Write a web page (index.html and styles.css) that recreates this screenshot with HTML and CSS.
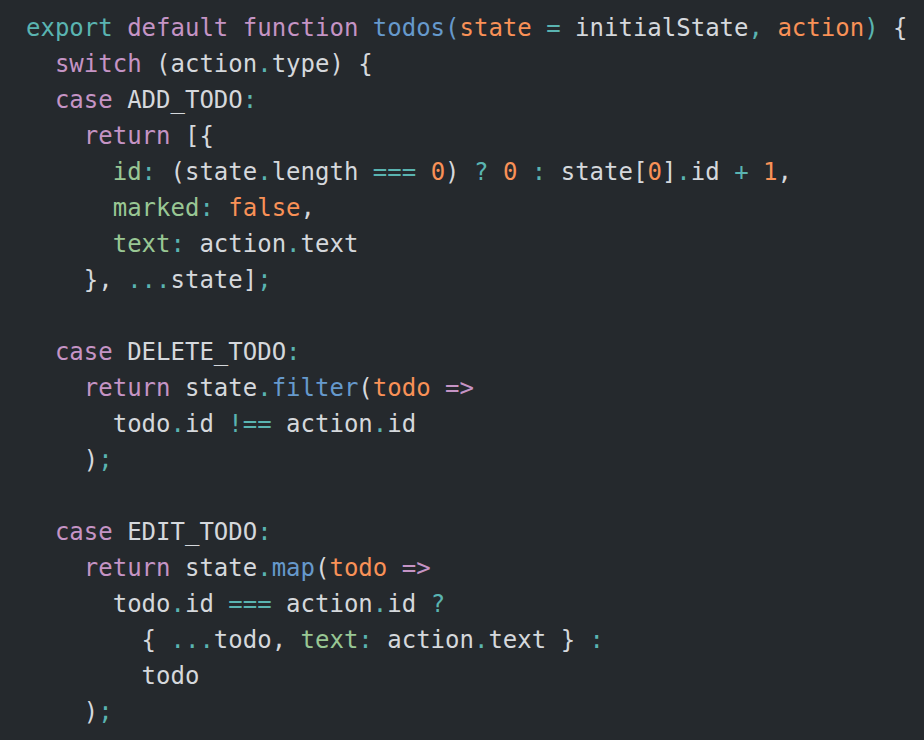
FILE: index.html
```html
<!DOCTYPE html>
<html>
<head>
<meta charset="utf-8">
<link rel="stylesheet" href="styles.css">
</head>
<body>
<pre class="code"><span class="t">export</span> <span class="k">default</span> <span class="k">function</span> <span class="f">todos(</span><span class="p">state</span> <span class="t">=</span> initialState<span class="t">,</span> <span class="p">action</span><span class="t">)</span> {
  <span class="k">switch</span> (action<span class="t">.</span>type) {
  <span class="k">case</span> ADD_TODO<span class="t">:</span>
    <span class="k">return</span> [{
      <span class="g">id</span><span class="t">:</span> (state<span class="t">.</span>length <span class="t">===</span> <span class="p">0</span>) <span class="t">?</span> <span class="p">0</span> <span class="t">:</span> state[<span class="p">0</span>]<span class="t">.</span>id <span class="t">+</span> <span class="p">1</span>,
      <span class="g">marked</span><span class="t">:</span> <span class="p">false</span>,
      <span class="g">text</span><span class="t">:</span> action<span class="t">.</span>text
    }, <span class="t">...</span>state]<span class="t">;</span>

  <span class="k">case</span> DELETE_TODO<span class="t">:</span>
    <span class="k">return</span> state<span class="t">.</span><span class="f">filter</span>(<span class="p">todo</span> <span class="k">=&gt;</span>
      todo<span class="t">.</span>id <span class="t">!==</span> action<span class="t">.</span>id
    )<span class="t">;</span>

  <span class="k">case</span> EDIT_TODO<span class="t">:</span>
    <span class="k">return</span> state<span class="t">.</span><span class="f">map</span>(<span class="p">todo</span> <span class="k">=&gt;</span>
      todo<span class="t">.</span>id <span class="t">===</span> action<span class="t">.</span>id <span class="t">?</span>
        { <span class="t">...</span>todo, <span class="g">text</span><span class="t">:</span> action<span class="t">.</span>text } <span class="t">:</span>
        todo
    )<span class="t">;</span></pre>
</body>
</html>
```

FILE: styles.css
```css
html, body {
  margin: 0;
  padding: 0;
  background: #25292d;
  height: 100%;
  overflow: hidden;
}
.code {
  margin: 0;
  padding: 10px 0 0 26px;
  font-family: "DejaVu Sans Mono", monospace;
  font-size: 24px;
  line-height: 36px;
  color: #d5d8dc;
  white-space: pre;
}
.t { color: #5ab4b1; }
.k { color: #c594c5; }
.f { color: #6699cc; }
.p { color: #f99157; }
.g { color: #99c794; }
```
